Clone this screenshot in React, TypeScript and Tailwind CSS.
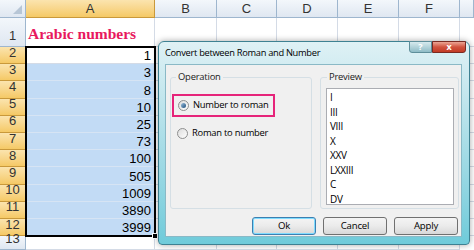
import React from "react";

const cols = ["A", "B", "C", "D", "E", "F"];
const colW = [129, 62, 60, 61, 61, 61];
const nums = ["1", "3", "8", "10", "25", "73", "100", "505", "1009", "3890", "3999"];
const roman = ["I", "III", "VIII", "X", "XXV", "LXXIII", "C", "DV"];

const hdrCls =
  "border-r border-b border-[#9eb6ce] bg-gradient-to-b from-[#f3f7fb] to-[#dfe7f1] text-[#333] flex items-center justify-center";
const selHdrCls =
  "border-r border-b border-[#c9993b] bg-gradient-to-b from-[#fbe4ae] to-[#f5c965] text-[#333] flex items-center justify-center";

function Row({ label, h, sel, children }: { label: string; h: number; sel?: boolean; children: React.ReactNode }) {
  return (
    <div className="flex" style={{ height: h }}>
      <div className={`w-[26px] shrink-0 ${sel ? selHdrCls : hdrCls} !items-end pb-[1px]`}>{label}</div>
      {children}
    </div>
  );
}

function Cell({ w, cls, children }: { w: number; cls?: string; children?: React.ReactNode }) {
  return (
    <div className={`shrink-0 border-r border-b border-[#d4dbe6] ${cls ?? "bg-white"}`} style={{ width: w }}>
      {children}
    </div>
  );
}

function Radio({ on }: { on?: boolean }) {
  return (
    <div className="w-[11px] h-[11px] shrink-0 rounded-full border border-[#8e8f8f] bg-gradient-to-br from-[#dcdcdc] to-[#ffffff] flex items-center justify-center">
      {on && <div className="w-[5px] h-[5px] rounded-full bg-gradient-to-br from-[#9cc0de] to-[#1e4f7c]" />}
    </div>
  );
}

function Btn({ children, cls }: { children: React.ReactNode; cls?: string }) {
  return (
    <div
      className={`w-[64px] h-[18px] rounded-[3px] border border-[#707070] bg-gradient-to-b from-[#f4f4f4] via-[#ebebeb] to-[#d8d8d8] flex items-center justify-center text-[9.6px] tracking-[-0.2px] text-black ${cls ?? ""}`}
    >
      {children}
    </div>
  );
}

export default function App() {
  return (
    <div className="relative w-[474px] h-[250px] overflow-hidden bg-white text-[13px] text-black" style={{ fontFamily: '"Liberation Sans", Arial, sans-serif' }}>
      {/* header row */}
      <div className="flex h-[18px]">
        <div className={`w-[26px] shrink-0 ${hdrCls} relative`}>
          <div className="absolute right-[3px] bottom-[3px] w-0 h-0 border-l-[9px] border-l-transparent border-b-[9px] border-b-[#b7c6d6]" />
        </div>
        {cols.map((c, i) => (
          <div key={c} className={`shrink-0 ${i === 0 ? selHdrCls : hdrCls} text-[13px]`} style={{ width: colW[i] }}>
            {c}
          </div>
        ))}
        <div className={`flex-1 ${hdrCls}`} />
      </div>
      {/* row 1 */}
      <Row label="1" h={29}>
        <Cell w={129}>
          <div className="h-full flex items-end pl-[2px] pb-[1px] text-[15.5px] font-bold text-[#e8185e]" style={{ fontFamily: '"Liberation Serif", "Times New Roman", serif' }}>
            Arabic numbers
          </div>
        </Cell>
        {colW.slice(1).map((w, i) => <Cell key={i} w={w} />)}
        <div className="flex-1 border-b border-[#d4dbe6]" />
      </Row>
      {nums.map((n, idx) => (
        <Row key={n} label={String(idx + 2)} h={17.2} sel>
          <Cell w={129} cls={idx === 0 ? "bg-white" : "bg-[#c2dbf5] !border-b-[#d6e4f4]"}>
            <div className="h-full flex items-end justify-end pr-[3px] leading-[15px]">{n}</div>
          </Cell>
          {colW.slice(1).map((w, i) => <Cell key={i} w={w} />)}
          <div className="flex-1 border-b border-[#d4dbe6]" />
        </Row>
      ))}
      <Row label="13" h={14}>
        <Cell w={129} />
        {colW.slice(1).map((w, i) => <Cell key={i} w={w} />)}
      </Row>

      {/* selection border */}
      <div className="absolute left-[25px] top-[46px] w-[131px] h-[191px] border-2 border-black pointer-events-none" />
      <div className="absolute left-[152px] top-[233px] w-[6px] h-[6px] bg-black border border-white" />

      {/* dialog */}
      <div
        className="absolute left-[158px] top-[41px] w-[312px] h-[204px] rounded-t-[6px] rounded-b-[4px] border border-[#3e8192] bg-gradient-to-b from-[#dff1f5] via-[#a9dde7] to-[#6fcbda] shadow-[0_0_6px_rgba(0,0,0,0.35)] flex flex-col"
        style={{ fontFamily: '"Open Sans", "Noto Sans", sans-serif' }}
      >
        <div className="h-[22px] shrink-0 flex items-start relative">
          <div className="pl-[6px] pt-[5px] text-[9.3px] leading-[12px] tracking-[-0.3px] text-black">Convert between Roman and Number</div>
          <div className="absolute right-[3px] -top-[1px] flex">
            <div className="w-[23px] h-[12px] rounded-bl-[3px] border border-[#5e8e9a] bg-gradient-to-b from-[#d7eaee] to-[#8fbcc6] text-[9px] leading-[10px] text-white font-bold flex items-center justify-center">?</div>
            <div className="w-[34px] h-[12px] rounded-br-[3px] border border-[#7a2a22] bg-gradient-to-b from-[#eaa595] via-[#d1533f] to-[#c23b25] text-[9px] leading-[10px] text-white font-bold flex items-center justify-center">x</div>
          </div>
        </div>
        <div className="flex-1 ml-[6px] mr-[7px] mb-[7px] border border-[#8ab9c6] bg-[#f0f0f0] flex flex-col pt-[12px] pl-[4px] pr-[2px]">
          <div className="flex gap-[8px] h-[132px]">
            {/* Operation */}
            <div className="w-[143px] border border-[#d5dfe5] rounded-[3px] relative">
              <div className="absolute -top-[7px] left-[5px] bg-[#f0f0f0] px-[2px] text-[9.4px] leading-[12px] tracking-[-0.2px] text-[#222]">Operation</div>
              <div className="mt-[16px] ml-[1px] w-[103px] h-[23px] border-2 border-[#e6247a] flex items-center pl-[4px] gap-[4px] text-[9.4px] tracking-[-0.25px] whitespace-nowrap">
                <Radio on />
                <span>Number to roman</span>
              </div>
              <div className="mt-[9px] ml-[6px] flex items-center gap-[4px] text-[9.4px] tracking-[-0.25px] whitespace-nowrap">
                <Radio />
                <span>Roman to number</span>
              </div>
            </div>
            {/* Preview */}
            <div className="w-[140px] border border-[#d5dfe5] rounded-[3px] relative pl-[5px] pr-[4px] pt-[10px] pb-[3px]">
              <div className="absolute -top-[7px] left-[6px] bg-[#f0f0f0] px-[2px] text-[9.4px] leading-[12px] tracking-[-0.2px] text-[#222]">Preview</div>
              <div className="h-full border border-[#abadb3] bg-white pl-[3px] pt-[1px] text-[10px] leading-[14.5px] tracking-[-0.3px]">
                {roman.map((r) => (
                  <div key={r}>{r}</div>
                ))}
              </div>
            </div>
          </div>
          <div className="flex justify-end gap-[7px] mt-[8px] pr-[1px]">
            <Btn cls="!border-[#3c7fb1] shadow-[inset_0_0_0_1px_#7fdcff]">Ok</Btn>
            <Btn>Cancel</Btn>
            <Btn>Apply</Btn>
          </div>
        </div>
      </div>
    </div>
  );
}
